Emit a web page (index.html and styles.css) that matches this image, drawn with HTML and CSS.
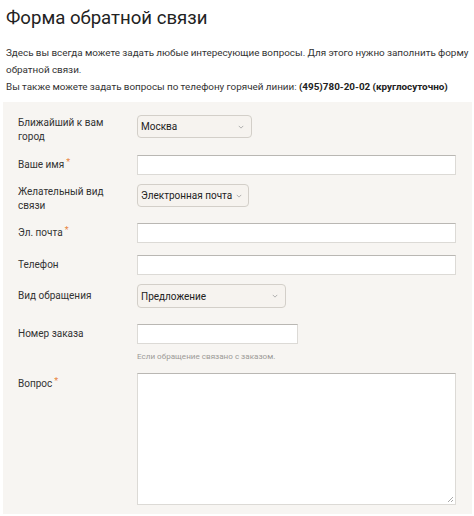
FILE: index.html
```html
<!DOCTYPE html>
<html lang="ru">
<head>
<meta charset="utf-8">
<title>Форма обратной связи</title>
<link rel="stylesheet" href="styles.css">
</head>
<body>
<div class="page">
  <h1 class="title">Форма обратной связи</h1>
  <div class="intro">
    <p>Здесь вы всегда можете задать любые интересующие вопросы. Для этого нужно заполнить форму обратной связи.</p>
    <p>Вы также можете задать вопросы по телефону горячей линии: <b>(495)780-20-02 (круглосуточно)</b></p>
  </div>
  <form class="panel">
    <div class="row row--top">
      <label class="label label--two">Ближайший к вам город</label>
      <div class="field">
        <div class="select select--city"><span>Москва</span><svg class="chev" viewBox="0 0 8 5"><path d="M1 1l3 3 3-3" fill="none" stroke="#9a9a9a" stroke-width="1"/></svg></div>
      </div>
    </div>
    <div class="row row--after-tight">
      <label class="label">Ваше имя<sup class="req">*</sup></label>
      <div class="field"><div class="input"></div></div>
    </div>
    <div class="row row--top row--after-std">
      <label class="label label--two">Желательный вид связи</label>
      <div class="field">
        <div class="select select--contact"><span>Электронная почта</span><svg class="chev" viewBox="0 0 8 5"><path d="M1 1l3 3 3-3" fill="none" stroke="#9a9a9a" stroke-width="1"/></svg></div>
      </div>
    </div>
    <div class="row row--after-wide">
      <label class="label">Эл. почта<sup class="req">*</sup></label>
      <div class="field"><div class="input"></div></div>
    </div>
    <div class="row row--after-tight">
      <label class="label">Телефон</label>
      <div class="field"><div class="input"></div></div>
    </div>
    <div class="row row--after-wider">
      <label class="label">Вид обращения</label>
      <div class="field">
        <div class="select select--type"><span>Предложение</span><svg class="chev" viewBox="0 0 8 5"><path d="M1 1l3 3 3-3" fill="none" stroke="#9a9a9a" stroke-width="1"/></svg></div>
      </div>
    </div>
    <div class="row row--top">
      <label class="label label--pad">Номер заказа</label>
      <div class="field">
        <div class="input input--short"></div>
        <div class="hint">Если обращение связано с заказом.</div>
      </div>
    </div>
    <div class="row row--top">
      <label class="label label--pad2">Вопрос<sup class="req">*</sup></label>
      <div class="field">
        <div class="textarea"><svg class="grip" viewBox="0 0 8 8"><path d="M7 2L2 7M7 5L5 7" stroke="#aaa" stroke-width="1"/></svg></div>
      </div>
    </div>
  </form>
</div>
</body>
</html>
```
FILE: styles.css
```css
* { box-sizing: border-box; }
html, body { margin: 0; padding: 0; background: #fff; }
body {
  font-family: Roboto, "Open Sans", sans-serif;
  color: #333;
  font-size: 10px;
}
.title {
  margin: 5px 0 0 6px;
  font-size: 18.6px;
  line-height: 26px;
  font-weight: 400;
  color: #222;
}
.intro { margin: 13px 0 0 6px; line-height: 17px; font-size: 9.9px; word-spacing: -0.2px; }
.intro p { margin: 0; }
.intro b { font-weight: 700; color: #222; }
.panel {
  margin: 7px 2px 0 3px;
  background: #f7f5f2;
  padding: 13px 16px 9px 15px;
  display: flex;
  flex-direction: column;
}
.row {
  display: flex;
  align-items: center;
  margin-bottom: 11px;
}
.row:last-child { margin-bottom: 0; }
.row--after-std { margin-bottom: 10px; }
.row--after-tight { margin-bottom: 9px; }
.row--after-wide { margin-bottom: 12px; }
.row--after-wider { margin-bottom: 16px; }
.row--top { align-items: flex-start; }
.label {
  width: 119px;
  flex: none;
  font-size: 10px;
  line-height: 14px;
  color: #333;
  padding-right: 8px;
}
.label--two { padding-top: 1px; }
.label--pad { padding-top: 3px; }
.label--pad2 { padding-top: 4px; }
.req { color: #e8843f; font-size: 9px; vertical-align: top; position: relative; top: -3px; margin-left: 2px; }
.field { flex: 1; min-width: 0; }
.input {
  height: 20px;
  background: #fff;
  border: 1px solid #dcdad6;
  border-top-color: #b9b7b3;
}
.input--short { width: 161px; }
.select {
  height: 23px;
  background: #f6f3ef;
  border: 1px solid #d3cfc9;
  border-radius: 4px;
  display: flex;
  align-items: center;
  justify-content: space-between;
  padding: 0 7px 0 3px;
  font-size: 10px;
  color: #222;
  white-space: nowrap;
}
.select--city { width: 115px; }
.select--contact { width: 112px; }
.select--type { width: 149px; height: 24px; }
.chev { width: 6px; height: 4px; flex: none; margin-left: 4px; }
.hint { margin-top: 6px; font-size: 8.1px; color: #9c9a97; line-height: 12px; }
.textarea {
  height: 132px;
  background: #fff;
  border: 1px solid #dcdad6;
  border-top-color: #b9b7b3;
  position: relative;
}
.grip { position: absolute; right: 1px; bottom: 1px; width: 8px; height: 8px; }
```
